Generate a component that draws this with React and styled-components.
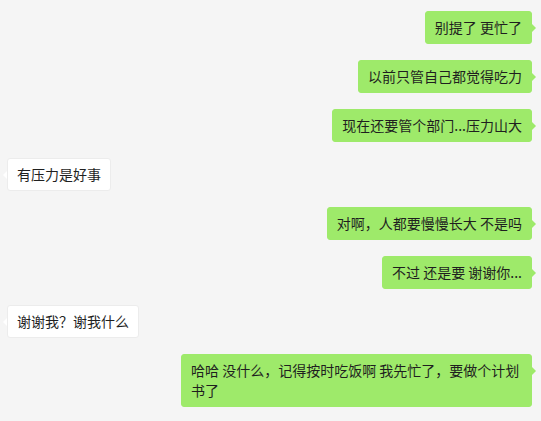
import React from "react";
import styled, { createGlobalStyle } from "styled-components";

const GlobalStyle = createGlobalStyle`
  html, body {
    margin: 0;
    padding: 0;
    background: #f5f5f5;
  }
  body {
    font-family: "Microsoft YaHei", "Noto Sans CJK SC", "Noto Sans", sans-serif;
  }
`;

const ChatMain = styled.div`
  display: flex;
  flex-direction: column;
  gap: 16px;
  padding: 11px 9px 14px 7px;
  min-height: 421px;
  box-sizing: border-box;
`;

const Row = styled.div`
  display: flex;
  justify-content: ${({ $mine }) => ($mine ? "flex-end" : "flex-start")};
`;

const Bubble = styled.div`
  position: relative;
  max-width: 351px;
  box-sizing: border-box;
  padding: 5px 9px 6px;
  font-size: 14px;
  line-height: 20px;
  color: #1f1f1f;
  border-radius: 3px;
  word-break: break-all;
  background: ${({ $mine }) => ($mine ? "#9eea6a" : "#ffffff")};
  border: 1px solid ${({ $mine }) => ($mine ? "#9eea6a" : "#ececec")};

  &::after {
    content: "";
    position: absolute;
    top: 12px;
    width: 0;
    height: 0;
    border-top: 4px solid transparent;
    border-bottom: 4px solid transparent;
    ${({ $mine }) =>
      $mine
        ? `right: -5px; border-left: 4px solid #9eea6a;`
        : `left: -5px; border-right: 4px solid #ffffff;`}
  }
`;

const messages = [
  { id: 1, mine: true, text: "别提了 更忙了" },
  { id: 2, mine: true, text: "以前只管自己都觉得吃力" },
  { id: 3, mine: true, text: "现在还要管个部门...压力山大" },
  { id: 4, mine: false, text: "有压力是好事" },
  { id: 5, mine: true, text: "对啊，人都要慢慢长大 不是吗" },
  { id: 6, mine: true, text: "不过 还是要 谢谢你..." },
  { id: 7, mine: false, text: "谢谢我？谢我什么" },
  { id: 8, mine: true, text: "哈哈 没什么，记得按时吃饭啊 我先忙了，要做个计划书了" },
];

const App = () => {
  return (
    <>
      <GlobalStyle />
      <ChatMain>
        {messages.map((m) => (
          <Row key={m.id} $mine={m.mine}>
            <Bubble $mine={m.mine}>{m.text}</Bubble>
          </Row>
        ))}
      </ChatMain>
    </>
  );
};

export default App;
